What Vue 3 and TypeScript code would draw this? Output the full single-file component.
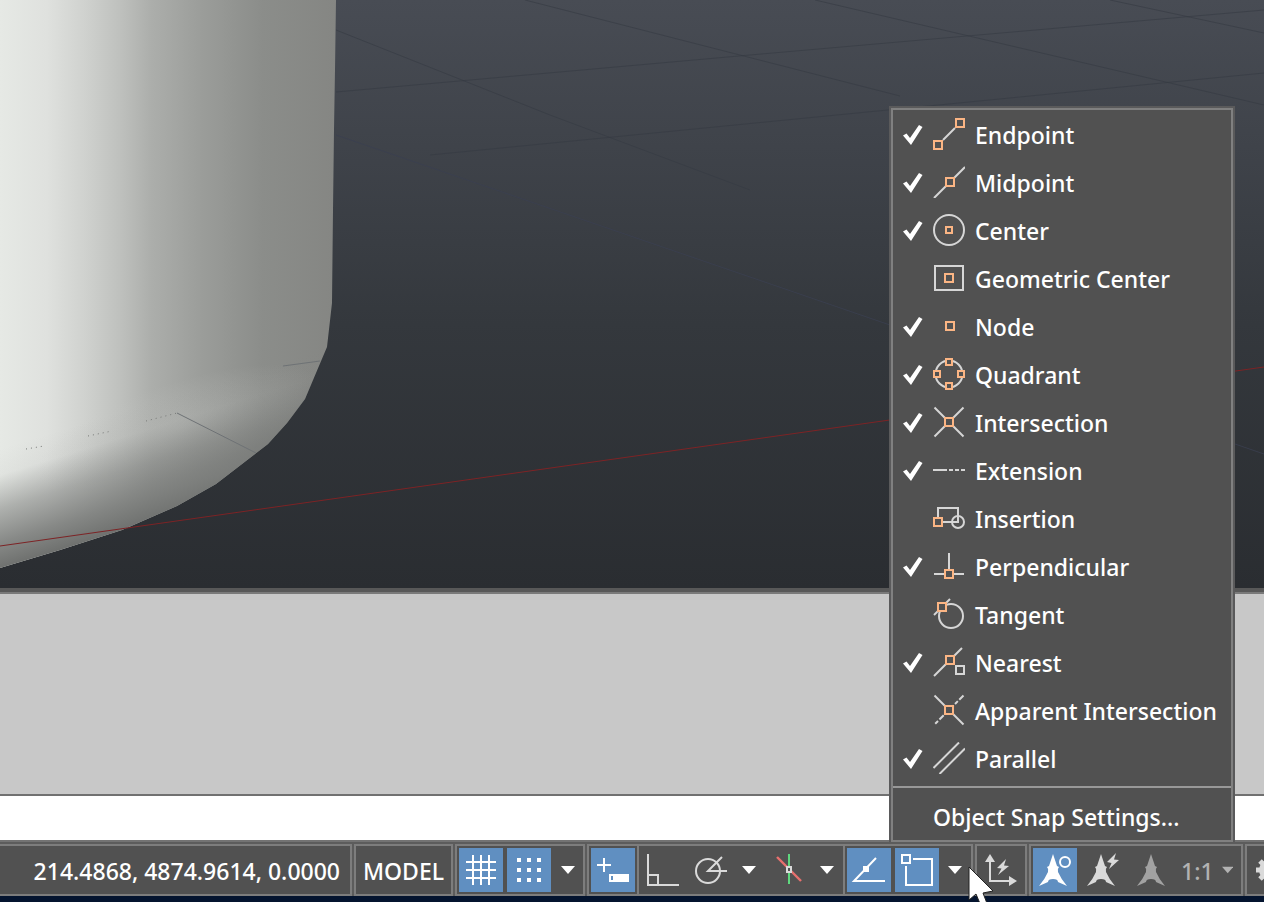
<script setup lang="ts">
import { ref } from 'vue'

interface SnapMode {
  id: string
  label: string
  on: boolean
}

const modes = ref<SnapMode[]>([
  { id: 'endpoint', label: 'Endpoint', on: true },
  { id: 'midpoint', label: 'Midpoint', on: true },
  { id: 'center', label: 'Center', on: true },
  { id: 'geocenter', label: 'Geometric Center', on: false },
  { id: 'node', label: 'Node', on: true },
  { id: 'quadrant', label: 'Quadrant', on: true },
  { id: 'intersection', label: 'Intersection', on: true },
  { id: 'extension', label: 'Extension', on: true },
  { id: 'insertion', label: 'Insertion', on: false },
  { id: 'perpendicular', label: 'Perpendicular', on: true },
  { id: 'tangent', label: 'Tangent', on: false },
  { id: 'nearest', label: 'Nearest', on: true },
  { id: 'apparent', label: 'Apparent Intersection', on: false },
  { id: 'parallel', label: 'Parallel', on: true },
])

const command = ref('')
</script>

<template>
  <div class="app">
    <main class="viewport">
      <svg class="scene" viewBox="0 0 1264 588" preserveAspectRatio="xMinYMax slice" aria-hidden="true">
        <defs>
          <linearGradient id="sky" x1="0" y1="0" x2="0" y2="1">
            <stop offset="0" stop-color="#484c54" />
            <stop offset="0.25" stop-color="#3f434a" />
            <stop offset="0.55" stop-color="#34383d" />
            <stop offset="1" stop-color="#2a2d31" />
          </linearGradient>
          <linearGradient id="side" gradientUnits="userSpaceOnUse" x1="0" y1="0" x2="336" y2="0">
            <stop offset="0" stop-color="#e6e9e5" />
            <stop offset="0.14" stop-color="#dfe1de" />
            <stop offset="0.25" stop-color="#d0d2cf" />
            <stop offset="0.36" stop-color="#bec0bd" />
            <stop offset="0.45" stop-color="#acaeab" />
            <stop offset="0.6" stop-color="#9b9d9a" />
            <stop offset="0.78" stop-color="#8b8d8a" />
            <stop offset="1" stop-color="#858683" />
          </linearGradient>
          <linearGradient id="fillet" gradientUnits="userSpaceOnUse" x1="60" y1="430" x2="94" y2="540">
            <stop offset="0" stop-color="#777977" stop-opacity="0" />
            <stop offset="0.22" stop-color="#777977" stop-opacity="0.05" />
            <stop offset="0.5" stop-color="#777977" stop-opacity="0.5" />
            <stop offset="0.78" stop-color="#777977" stop-opacity="0.85" />
            <stop offset="1" stop-color="#6e706e" stop-opacity="1" />
          </linearGradient>
          <radialGradient id="glow" gradientUnits="userSpaceOnUse" cx="0" cy="0" r="1" gradientTransform="translate(180 428) rotate(-18) scale(150 46)">
            <stop offset="0" stop-color="#c4c6c3" stop-opacity="0.4" />
            <stop offset="1" stop-color="#c4c6c3" stop-opacity="0" />
          </radialGradient>
          <clipPath id="body">
            <path d="M0 0H336L335 70L334 130L333 210L332 303L327 347L305 399L287 423L268 444L216 484L177 506L122 530L60 550L0 568Z" />
          </clipPath>
        </defs>
        <rect width="1264" height="588" fill="url(#sky)" />
        <g fill="none" stroke="#353a43" stroke-opacity="0.6">
          <path d="M336 30L550 115L750 190" />
          <path d="M525 0L900 96" />
          <path d="M815 0L1264 105" />
          <path d="M1110 0L1264 33" />
          <path d="M336 92L750 55L1264 10" />
          <path d="M430 155L1264 73" />
        </g>
        <path d="M336 135L890 325L1264 454" fill="none" stroke="#3b4050" stroke-opacity="0.8" />
        <g clip-path="url(#body)">
          <rect width="340" height="588" fill="url(#side)" />
          <rect width="340" height="588" fill="url(#glow)" />
          <rect width="340" height="588" fill="url(#fillet)" />
        </g>
        <path d="M177 413L256 453M283 366L320 361" fill="none" stroke="#6e7275" />
        <path d="M26 449L44 446M88 436L112 431M146 421L177 413" fill="none" stroke="#777977" stroke-dasharray="1 4" />
        <path d="M0 546L1264 367" fill="none" stroke="#7d2325" />
      </svg>
    </main>

    <section class="history" aria-label="Command history"></section>
    <input v-model="command" class="command" type="text" aria-label="Command line" />

    <footer class="status">
      <div class="panel coords"><span class="caption">214.4868, 4874.9614, 0.0000</span></div>
      <div class="panel"><button class="model caption" type="button">MODEL</button></div>

      <div class="panel">
        <button class="tool on" type="button" aria-label="Grid">
          <svg viewBox="0 0 44 44"><path d="M14 7V37M22 7V37M30 7V37M7 14H37M7 22H37M7 30H37" /></svg>
        </button>
        <button class="tool on" type="button" aria-label="Snap mode">
          <svg viewBox="0 0 44 44"><path class="solid" d="M10 10h4v4h-4zM20 10h4v4h-4zM30 10h4v4h-4zM10 20h4v4h-4zM20 20h4v4h-4zM30 20h4v4h-4zM10 30h4v4h-4zM20 30h4v4h-4zM30 30h4v4h-4z" /></svg>
        </button>
        <button class="drop" type="button" aria-label="Snap options"><svg viewBox="0 0 14 8"><path d="M0 0H14L7 8Z" /></svg></button>
      </div>

      <div class="panel joined">
        <button class="tool on" type="button" aria-label="Dynamic input">
          <svg viewBox="0 0 44 44"><path d="M13 10V24M6 17H20" /><path class="solid" fill-rule="evenodd" d="M18 26H38V34H18ZM20 28V32H22V28Z" /></svg>
        </button>
        <span class="rule"></span>
        <button class="tool" type="button" aria-label="Ortho mode">
          <svg viewBox="0 0 44 44"><path d="M7 6V37H38M7 27H17V37" /></svg>
        </button>
        <button class="tool" type="button" aria-label="Polar tracking">
          <svg viewBox="0 0 44 44"><circle cx="19" cy="23" r="12" /><path d="M33 9L19 23H38" /></svg>
        </button>
        <button class="drop" type="button" aria-label="Polar options"><svg viewBox="0 0 14 8"><path d="M0 0H14L7 8Z" /></svg></button>
        <button class="tool" type="button" aria-label="Isometric drafting">
          <svg viewBox="0 0 44 44"><path stroke="#5fd87e" d="M22 6V36" /><path stroke="#e8706e" stroke-width="2.4" d="M10 9L34 33" /><path fill="#515151" d="M20 19h4v5h-4z" /></svg>
        </button>
        <button class="drop" type="button" aria-label="Isometric options"><svg viewBox="0 0 14 8"><path d="M0 0H14L7 8Z" /></svg></button>
        <span class="rule"></span>
        <button class="tool on" type="button" aria-label="Object snap tracking">
          <svg viewBox="0 0 44 44"><path d="M29 10L7 33H38" /><path class="solid" d="M16 18h6v6h-6z" /></svg>
        </button>
        <button class="tool on" type="button" aria-label="Object snap">
          <svg viewBox="0 0 44 44"><path d="M7 7H15V15H7ZM18 11H37V37H11V18" /></svg>
        </button>
        <button class="drop" type="button" aria-label="Object snap options"><svg viewBox="0 0 14 8"><path d="M0 0H14L7 8Z" /></svg></button>
      </div>

      <div class="panel">
        <button class="tool" type="button" aria-label="Dynamic UCS">
          <svg viewBox="0 0 44 44"><path d="M11 13V33H31" /><path class="solid" d="M11 6L16 14H6ZM38 33L30 38V28ZM27 11L18 20L22.500 20.500L19 27L30 18L25 17.500Z" /></svg>
        </button>
      </div>

      <div class="panel">
        <button class="tool on" type="button" aria-label="Annotation visibility">
          <svg viewBox="0 0 44 44"><path class="solid" d="M20 6L24 18L26 19Q24 21 25 24Q28 31 34 38L25 34Q25 31 20 31Q15 31 15 34L6 38Q12 31 15 24Q16 21 14 19L16 18Z" /><circle cx="32" cy="14" r="5" /></svg>
        </button>
        <button class="tool" type="button" aria-label="Automatic annotation scale">
          <svg viewBox="0 0 44 44"><path class="solid" d="M20 6L24 18L26 19Q24 21 25 24Q28 31 34 38L25 34Q25 31 20 31Q15 31 15 34L6 38Q12 31 15 24Q16 21 14 19L16 18ZM35 5L26 14L30.500 15L28 21L38 12L33 11.500Z" /></svg>
        </button>
        <button class="tool wide dim" type="button" aria-label="Annotation scale">
          <svg viewBox="0 0 44 44"><path class="solid" d="M20 6L24 18L26 19Q24 21 25 24Q28 31 34 38L25 34Q25 31 20 31Q15 31 15 34L6 38Q12 31 15 24Q16 21 14 19L16 18Z" /></svg>
        </button>
        <button class="scale" type="button"><span class="caption">1:1</span><svg viewBox="0 0 14 8"><path d="M0 0H14L7 8Z" /></svg></button>
      </div>

      <div class="panel last">
        <button class="tool" type="button" aria-label="Workspace switching">
          <svg viewBox="0 0 44 44"><circle cx="20" cy="22" r="7.500" stroke-width="5" /><path stroke-width="5" d="M20 9V14M20 30V35M7 22H12M28 22H33M11 13L14 16M26 28L29 31M11 31L14 28M26 16L29 13" /></svg>
        </button>
      </div>
    </footer>
    <div class="desktop"></div>

    <div class="menu" role="menu" aria-label="Object snap">
      <button v-for="m in modes" :key="m.id" class="item" type="button" role="menuitemcheckbox" :aria-checked="m.on" @click="m.on = !m.on">
        <span class="tick"><svg v-if="m.on" viewBox="0 0 20 22"><path d="M0 12.500L3.500 10.500L7 15L16 2L19.500 4L8 22Z" /></svg></span>
        <svg class="glyph" viewBox="0 0 32 32">
          <template v-if="m.id === 'endpoint'">
            <path d="M10 22L22 10" /><path class="mark" d="M23 1h8v8h-8zM1 23h8v8h-8z" />
          </template>
          <template v-else-if="m.id === 'midpoint'">
            <path d="M1 32L32 1" /><path class="mark" d="M13 12h8v8h-8z" />
          </template>
          <template v-else-if="m.id === 'center'">
            <circle cx="16" cy="16" r="15" /><path class="mark" d="M13 13h6v6h-6z" />
          </template>
          <template v-else-if="m.id === 'geocenter'">
            <path d="M2 4H30V28H2Z" /><path class="mark" d="M12 12h8v8h-8z" />
          </template>
          <template v-else-if="m.id === 'node'">
            <path class="mark" d="M13 12h8v8h-8z" />
          </template>
          <template v-else-if="m.id === 'quadrant'">
            <circle cx="16" cy="16" r="13.500" /><path class="mark" d="M13 1h6v6h-6zM1 13h6v6h-6zM25 13h6v6h-6zM13 25h6v6h-6z" />
          </template>
          <template v-else-if="m.id === 'intersection'">
            <path d="M1.500 1.500L30.500 30.500M30.500 1.500L1.500 30.500" /><path class="mark" d="M12 12h8v8h-8z" />
          </template>
          <template v-else-if="m.id === 'extension'">
            <path d="M0 16H14M16 16H20M22 16H26M28 16H32" />
          </template>
          <template v-else-if="m.id === 'insertion'">
            <path d="M5 16V6H25V20H9" /><circle cx="25" cy="20" r="6" /><path class="mark" d="M1 16h8v8h-8z" />
          </template>
          <template v-else-if="m.id === 'perpendicular'">
            <path d="M16 3V24M1 24H31" /><path class="mark" d="M12 20h8v8h-8z" />
          </template>
          <template v-else-if="m.id === 'tangent'">
            <circle cx="18" cy="18" r="12" /><path d="M1 17L17 1" /><path class="mark" d="M5 5h8v8h-8z" />
          </template>
          <template v-else-if="m.id === 'nearest'">
            <path d="M1 30L29 2M23 20h8v8h-8z" /><path class="mark" d="M13 10h8v8h-8z" />
          </template>
          <template v-else-if="m.id === 'apparent'">
            <path d="M1.500 1.500L30.500 30.500" /><path d="M30.500 1.500L1.500 30.500" stroke-dasharray="6 2 4 2" /><path class="mark" d="M12 12h8v8h-8z" />
          </template>
          <template v-else>
            <path d="M0.500 26L26 0.500M6.500 32L32 6.500" />
          </template>
        </svg>
        <span class="label">{{ m.label }}</span>
      </button>
      <hr class="divider" />
      <button class="settings" type="button" role="menuitem">Object Snap Settings...</button>
    </div>

    <svg class="pointer" viewBox="0 0 26 36" aria-hidden="true">
      <path d="M1 1V34L8 28L13 40H20L15 27L25 25Z" />
    </svg>
  </div>
</template>

<style>
body {
  margin: 0;
  overflow: hidden;
}
</style>

<style scoped>
.app {
  position: relative;
  display: flex;
  flex-direction: column;
  height: 100vh;
  overflow: hidden;
  background: #2a2d31;
  color: #fff;
  font-family: 'Noto Sans', 'Open Sans', sans-serif;
  font-size: 23px;
  font-weight: 500;
}

button {
  margin: 0;
  padding: 0;
  border: 0;
  background: none;
  color: inherit;
  font: inherit;
}

.viewport {
  flex: 1;
  min-height: 0;
}

.scene {
  display: block;
  width: 100%;
  height: 100%;
}

.history {
  box-sizing: border-box;
  flex: none;
  height: 206px;
  border-top: 4px solid #585858;
  background: #c8c8c8;
  box-shadow: inset 0 2px #7a7a7a;
}

.command {
  box-sizing: border-box;
  flex: none;
  width: 100%;
  height: 46px;
  padding: 0 12px;
  border: 0;
  border-top: 2px solid #707070;
  border-radius: 0;
  outline: none;
  background: #fff;
  color: #222;
  font: inherit;
}

.status {
  display: flex;
  flex: none;
  gap: 2px;
  height: 52px;
  padding-top: 2px;
  border-top: 2px solid #737373;
  background: #5c5c5c;
}

.panel {
  box-sizing: border-box;
  display: flex;
  flex: none;
  align-items: center;
  gap: 4px;
  padding: 2px;
  border: 2px solid #7d7d7d;
  background: #515151;
}

.caption {
  padding-top: 2px;
}

.coords {
  justify-content: flex-end;
  width: 352px;
  padding-right: 10px;
  border-left: 0;
}

.model {
  width: 91px;
  height: 44px;
}

.joined {
  gap: 0;
  padding-right: 0;
}

.joined .tool + .tool {
  margin-left: 4px;
}

.joined .drop + .tool {
  margin-left: 2px;
}

.rule {
  align-self: stretch;
  width: 2px;
  margin: -2px 2px;
  background: #7d7d7d;
}

.drop + .rule {
  margin-left: 0;
}

.tool {
  flex: none;
  width: 44px;
  height: 44px;
  color: #dadada;
}

.tool svg {
  display: block;
  width: 44px;
  height: 44px;
  margin: 0 auto;
  fill: none;
  stroke: currentColor;
  stroke-width: 2;
}

.tool .solid {
  fill: currentColor;
  stroke: none;
}

.on {
  background: #608fc1;
  color: #fff;
}

.wide {
  width: 48px;
}

.dim {
  color: #a2a2a2;
}

.drop {
  display: flex;
  align-items: center;
  justify-content: center;
  width: 32px;
  height: 44px;
}

.drop svg,
.scale svg {
  width: 14px;
  height: 8px;
  fill: currentColor;
}

.panel:not(.joined) .drop {
  width: 26px;
}

.scale {
  display: flex;
  align-items: center;
  justify-content: flex-end;
  gap: 8px;
  width: 58px;
  height: 44px;
  padding-right: 6px;
  color: #b2b2b2;
}

.last {
  flex: 1 0 0;
  min-width: 0;
  overflow: hidden;
  border-right: 0;
}

.desktop {
  flex: none;
  height: 6px;
  background: #04142f;
}

.menu {
  position: absolute;
  right: 29px;
  bottom: 60px;
  box-sizing: border-box;
  display: flex;
  flex-direction: column;
  width: 346px;
  padding: 2px;
  background: #515151;
  border: 2px solid #5a5a5b;
  border-bottom: 0;
  box-shadow: inset 0 0 0 2px #808080;
}

.item {
  display: flex;
  align-items: center;
  height: 48px;
  padding-left: 10px;
  text-align: left;
}

.tick {
  width: 30px;
  height: 22px;
}

.tick svg {
  display: block;
  width: 20px;
  height: 22px;
  fill: #fff;
}

.glyph {
  width: 32px;
  height: 32px;
  fill: none;
  stroke: #d6d6d6;
  stroke-width: 2;
}

.mark {
  fill: #515151;
  stroke: #fbb584;
}

.label {
  padding: 2px 0 0 10px;
}

.divider {
  width: 100%;
  height: 2px;
  margin: 4px 0 0;
  border: 0;
  background: #989898;
}

.settings {
  height: 52px;
  padding: 6px 0 0 40px;
  text-align: left;
}

.pointer {
  position: absolute;
  right: 270px;
  bottom: 0;
  width: 26px;
  height: 36px;
  fill: #fff;
  stroke: #222;
  stroke-width: 1;
}
</style>
